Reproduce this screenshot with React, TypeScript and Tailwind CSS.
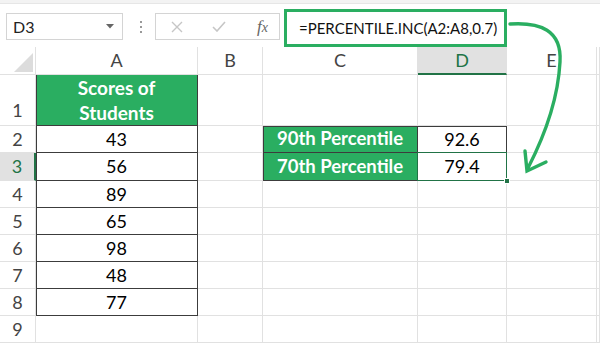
import React from "react";

type CellProps = {
  children?: React.ReactNode;
  className?: string;
};

function Cell({ children, className = "" }: CellProps) {
  return (
    <div className={`flex items-center justify-center border-r border-b ${className}`}>
      {children}
    </div>
  );
}

const rowsA = ["43", "56", "89", "65", "98", "48", "77"];

export default function App() {
  const rows: React.ReactNode[] = [];

  rows.push(
    <React.Fragment key="r1">
      <div className="flex items-end justify-center border-r border-b border-[#e1e1e1] pb-[1px] text-[18px] text-[#444]">1</div>
      <div className="flex flex-col items-center justify-center border-r border-b border-[#3c3c3c] bg-[#2aae61] text-[19px] font-bold leading-[25px] text-white shadow-[inset_1px_0_0_#3c3c3c]">
        <span>Scores of</span>
        <span>Students</span>
      </div>
      <Cell className="border-[#e1e1e1]" />
      <Cell className="border-[#e1e1e1]" />
      <Cell className="border-[#e1e1e1]" />
      <Cell className="border-[#e1e1e1]" />
      <Cell className="border-[#e1e1e1]" />
    </React.Fragment>
  );

  rowsA.forEach((v, i) => {
    const n = i + 2;
    const isSel = n === 3;
    rows.push(
      <React.Fragment key={`r${n}`}>
        <div
          className={
            isSel
              ? "flex items-center justify-center border-r-2 border-b border-r-[#217346] border-b-[#e1e1e1] bg-[#e1e1e1] text-[18px] text-[#217346]"
              : "flex items-center justify-center border-r border-b border-[#e1e1e1] text-[18px] text-[#444]"
          }
        >
          {n}
        </div>
        <Cell className="border-[#3c3c3c] text-[18px] text-black shadow-[inset_1px_0_0_#3c3c3c]">{v}</Cell>
        <Cell className="border-[#e1e1e1]" />
        {n === 2 ? (
          <Cell className="border-[#3c3c3c] bg-[#2aae61] text-[18.5px] font-bold text-white shadow-[inset_1px_1px_0_#3c3c3c]">
            90th Percentile
          </Cell>
        ) : n === 3 ? (
          <Cell className="border-[#3c3c3c] bg-[#2aae61] text-[18.5px] font-bold text-white shadow-[inset_1px_0_0_#3c3c3c]">
            70th Percentile
          </Cell>
        ) : (
          <Cell className="border-[#e1e1e1]" />
        )}
        {n === 2 ? (
          <Cell className="border-[#3c3c3c] text-[18px] text-black shadow-[inset_0_1px_0_#3c3c3c]">92.6</Cell>
        ) : n === 3 ? (
          <div className="relative flex items-center justify-center border-r border-b border-[#3c3c3c] text-[18px] text-black">
            79.4
            <div className="pointer-events-none absolute -left-px -top-px -right-px -bottom-px border-[1.5px] border-[#217346]" />
            <div className="absolute -bottom-[4px] -right-[4px] h-[6px] w-[6px] border border-white bg-[#217346]" />
          </div>
        ) : (
          <Cell className="border-[#e1e1e1]" />
        )}
        <Cell className="border-[#e1e1e1]" />
        <Cell className="border-[#e1e1e1]" />
      </React.Fragment>
    );
  });

  rows.push(
    <React.Fragment key="r9">
      <div className="flex items-center justify-center border-r border-b border-[#e1e1e1] text-[18px] text-[#444]">9</div>
      <Cell className="border-[#e1e1e1]" />
      <Cell className="border-[#e1e1e1]" />
      <Cell className="border-[#e1e1e1]" />
      <Cell className="border-[#e1e1e1]" />
      <Cell className="border-[#e1e1e1]" />
      <Cell className="border-[#e1e1e1]" />
    </React.Fragment>
  );

  return (
    <div
      className="relative h-[346px] w-[600px] overflow-hidden bg-white"
      style={{ fontFamily: "Lato, 'Open Sans', sans-serif" }}
    >
      {/* toolbar */}
      <div className="h-[4px] border-b border-[#e6e6e6] bg-[#f3f3f3]" />
      <div className="flex h-[43px] items-start pt-[5px]">
        {/* name box */}
        <div className="ml-[6px] mt-[4px] flex h-[27px] w-[117px] items-center justify-between border border-[#d4d4d4] bg-white pl-[6px] pr-[8px] text-[16px] text-[#222]">
          <span>D3</span>
          <svg width="8" height="5" viewBox="0 0 8 5">
            <path d="M0 0 L8 0 L4 4.5 Z" fill="#666" />
          </svg>
        </div>
        {/* dots */}
        <div className="ml-[15px] mt-[12px] flex w-[6px] flex-col items-center gap-[3px]">
          <span className="h-[2px] w-[2px] bg-[#999]" />
          <span className="h-[2px] w-[2px] bg-[#999]" />
          <span className="h-[2px] w-[2px] bg-[#999]" />
        </div>
        {/* fx box */}
        <div className="ml-[11px] mt-[4px] flex h-[27px] w-[125px] items-center border border-[#d4d4d4] bg-white">
          <svg className="ml-[15px]" width="12" height="12" viewBox="0 0 12 12">
            <path d="M1 1 L11 11 M11 1 L1 11" stroke="#c6c6c6" strokeWidth="1.4" fill="none" />
          </svg>
          <svg className="ml-[29px]" width="14" height="11" viewBox="0 0 14 11">
            <path d="M1 6 L5 10 L13 1" stroke="#c6c6c6" strokeWidth="1.6" fill="none" />
          </svg>
          <span
            className="ml-[31px] text-[17px] italic text-[#666]"
            style={{ fontFamily: "'Liberation Serif', serif" }}
          >
            f<span className="text-[14px]">x</span>
          </span>
        </div>
        {/* formula */}
        <div className="ml-[4px] flex h-[38px] w-[223px] items-center border-[3px] border-[#2aae61] bg-white pl-[12px] text-[15px] text-[#111]">
          =PERCENTILE.INC(A2:A8,0.7)
        </div>
      </div>

      {/* grid */}
      <div className="grid grid-cols-[36px_162px_65px_155px_89px_90px_1fr] grid-rows-[28px_51px_27px_28px_27px_27px_27px_27px_27px_27px]">
        <div className="relative border-r border-b border-[#e1e1e1]">
          <svg className="absolute bottom-[2px] right-[2px]" width="19" height="19" viewBox="0 0 19 19">
            <path d="M19 0 L19 19 L0 19 Z" fill="#dcdcdc" />
          </svg>
        </div>
        <Cell className="border-[#e1e1e1] text-[18px] text-[#444]">A</Cell>
        <Cell className="border-[#e1e1e1] text-[18px] text-[#444]">B</Cell>
        <Cell className="border-[#e1e1e1] text-[18px] text-[#444]">C</Cell>
        <div className="flex items-center justify-center border-r border-b-2 border-r-[#e1e1e1] border-b-[#217346] bg-[#e1e1e1] text-[18px] text-[#217346]">
          D
        </div>
        <Cell className="border-[#e1e1e1] text-[18px] text-[#444]">E</Cell>
        <Cell className="border-[#e1e1e1]" />
        {rows}
      </div>

      {/* arrow annotation */}
      <svg className="pointer-events-none absolute left-0 top-0" width="600" height="346" viewBox="0 0 600 346">
        <path
          d="M510 24 C 540 22, 562 30, 560 62 C 558 100, 545 135, 528 168"
          stroke="#2aae61"
          strokeWidth="3.4"
          fill="none"
          strokeLinecap="round"
        />
        <path d="M525 151 L527 171 L546 162" stroke="#2aae61" strokeWidth="3.4" fill="none" strokeLinejoin="miter" strokeLinecap="round" />
      </svg>
    </div>
  );
}
